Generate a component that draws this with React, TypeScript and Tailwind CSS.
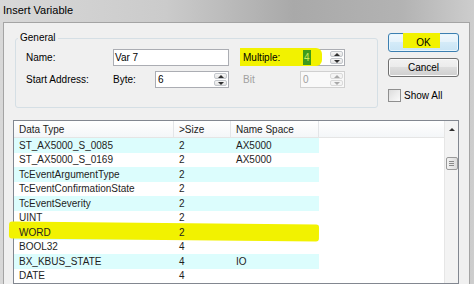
import React from "react";

const rows = [
  { type: "ST_AX5000_S_0085", size: "2", ns: "AX5000" },
  { type: "ST_AX5000_S_0169", size: "2", ns: "AX5000" },
  { type: "TcEventArgumentType", size: "2", ns: "" },
  { type: "TcEventConfirmationState", size: "2", ns: "" },
  { type: "TcEventSeverity", size: "2", ns: "" },
  { type: "UINT", size: "2", ns: "" },
  { type: "WORD", size: "2", ns: "" },
  { type: "BOOL32", size: "4", ns: "" },
  { type: "BX_KBUS_STATE", size: "4", ns: "IO" },
  { type: "DATE", size: "4", ns: "" },
];

const Arrow = ({ up, disabled }: { up?: boolean; disabled?: boolean }) => (
  <span
    className={
      "h-0 w-0 border-l-[3px] border-r-[3px] border-l-transparent border-r-transparent " +
      (up
        ? disabled
          ? "border-b-[3px] border-b-[#a8a8a8]"
          : "border-b-[3px] border-b-[#303030]"
        : disabled
          ? "border-t-[3px] border-t-[#a8a8a8]"
          : "border-t-[3px] border-t-[#303030]")
    }
  />
);

const SpinBox = ({
  width,
  value,
  disabled,
  selected,
}: {
  width: string;
  value: string;
  disabled?: boolean;
  selected?: boolean;
}) => (
  <div
    className={
      "flex h-[17px] border " +
      width +
      (disabled ? " border-[#d0d0d0] bg-[#f9f9f9]" : " border-[#abadb3] bg-white")
    }
  >
    <div className={"flex flex-1 items-center pl-[2px] " + (disabled ? "text-[#a0a0a0]" : "")}>
      {selected ? (
        <span className="relative z-20 bg-[#3e9a1c] px-[1px] text-[#cfe85a]">{value}</span>
      ) : (
        value
      )}
    </div>
    <div className="relative z-20 flex w-[15px] flex-col gap-px p-px">
      <div
        className={
          "flex flex-1 items-center justify-center rounded-[2px] border " +
          (disabled
            ? "border-[#dadada] bg-[#f4f4f4]"
            : "border-[#c3c7cc] bg-[linear-gradient(#f6f6f6,#e3e3e3)]")
        }
      >
        <Arrow up disabled={disabled} />
      </div>
      <div
        className={
          "flex flex-1 items-center justify-center rounded-[2px] border " +
          (disabled
            ? "border-[#dadada] bg-[#f4f4f4]"
            : "border-[#c3c7cc] bg-[linear-gradient(#f6f6f6,#e3e3e3)]")
        }
      >
        <Arrow disabled={disabled} />
      </div>
    </div>
  </div>
);

export default function App() {
  return (
    <div className="relative flex h-[284px] w-[474px] flex-col overflow-hidden bg-[linear-gradient(to_right,#d8d8d8_0%,#cbcbcb_35%,#a9a9a9_62%,#b3b3b3_85%,#cdcdcd_100%)] font-['Liberation_Sans',Arial,sans-serif] text-[10px] text-black">
      {/* title bar */}
      <div className="flex h-[22px] shrink-0 items-center pl-[3px] pb-[2px] text-[11px]">
        Insert Variable
      </div>

      <div className="flex min-h-0 flex-1 pl-[3px] pr-[4px]">
        <div className="flex min-h-0 flex-1 flex-col border-l border-r border-t border-[#a4a4a4] bg-[#f0f0f0]">
          {/* top section */}
          <div className="flex items-start">
            <fieldset className="ml-[11px] mt-[9px] w-[363px] min-w-0 rounded-[3px] border border-[#d5dfe5] px-[10px] pb-[19px]">
              <legend className="-ml-[8px] px-[2px] leading-[12px]">General</legend>
              <div className="flex flex-col gap-[5px] pt-[5px]">
                <div className="flex h-[17px] items-center">
                  <div className="w-[87px]">Name:</div>
                  <div className="flex h-[17px] w-[116px] items-center border border-[#abadb3] bg-white pl-[1px]">
                    Var 7
                  </div>
                  <div className="w-[14px]" />
                  <div className="relative z-20 w-[57px]">Multiple:</div>
                  <SpinBox width="w-[45px]" value="4" selected />
                </div>
                <div className="flex h-[17px] items-center">
                  <div className="w-[87px]">Start Address:</div>
                  <div className="w-[42px]">Byte:</div>
                  <SpinBox width="w-[74px]" value="6" />
                  <div className="w-[14px]" />
                  <div className="w-[57px] text-[#a0a0a0]">Bit</div>
                  <SpinBox width="w-[45px]" value="0" disabled />
                </div>
              </div>
            </fieldset>

            <div className="ml-[10px] mt-[10px] flex w-[71px] flex-col">
              <button className="h-[19px] rounded-[3px] border border-[#3c7fb1] bg-[linear-gradient(#f1f8fd,#e4f2fb_50%,#d4ebf8_50%,#c9e4f5)] shadow-[inset_0_0_0_1px_#e8f6fd]">
                <span className="relative z-20">OK</span>
              </button>
              <button className="mt-[6px] h-[19px] rounded-[3px] border border-[#707070] bg-[linear-gradient(#f2f2f2,#ebebeb_50%,#dddddd_50%,#cfcfcf)] shadow-[inset_0_0_0_1px_#fbfbfb]">
                Cancel
              </button>
              <label className="mt-[11px] flex items-center gap-[3px]">
                <span className="h-[13px] w-[13px] border border-[#8f8f8f] bg-[linear-gradient(135deg,#dcdcdc,#fbfbfb)]" />
                Show All
              </label>
            </div>
          </div>

          {/* list */}
          <div className="ml-[9px] mt-[12px] flex min-h-0 w-[446px] flex-1 border border-[#828790] bg-white">
            <div className="flex w-[430px] flex-col">
              <div className="flex h-[17px] shrink-0 border-b border-[#e5e5e5] bg-[linear-gradient(#ffffff,#f4f6f8)] text-[#222]">
                <div className="flex w-[160px] items-center border-r border-[#e3e5e8] pl-[5px]">Data Type</div>
                <div className="flex w-[57px] items-center border-r border-[#e3e5e8] pl-[5px]">&gt;Size</div>
                <div className="flex w-[88px] items-center border-r border-[#e3e5e8] pl-[5px]">Name Space</div>
                <div className="flex-1" />
              </div>
              {rows.map((r, i) => (
                <div key={r.type} className="flex h-[14.5px] shrink-0 text-[#1e1e1e]">
                  <div className={"flex w-[305px] items-center " + (i % 2 === 0 ? "bg-[#dcfdfd]" : "bg-white")}>
                    <div className="relative z-20 w-[160px] pl-[5px]">{r.type}</div>
                    <div className="relative z-20 w-[57px] pl-[5px]">{r.size}</div>
                    <div className="relative z-20 w-[88px] pl-[5px]">{r.ns}</div>
                  </div>
                </div>
              ))}
            </div>
            {/* scrollbar */}
            <div className="flex w-[14px] flex-col items-center border-l border-[#e6e6e6] bg-[#f3f3f3]">
              <div className="flex h-[17px] w-full items-center justify-center">
                <Arrow up />
              </div>
              <div className="mt-[19px] flex h-[13px] w-[12px] flex-col items-center justify-center gap-px rounded-[2px] border border-[#9a9a9a] bg-[linear-gradient(to_right,#f2f2f2,#dcdcdc)]">
                <span className="h-px w-[5px] bg-[#8a8a8a]" />
                <span className="h-px w-[5px] bg-[#8a8a8a]" />
                <span className="h-px w-[5px] bg-[#8a8a8a]" />
              </div>
            </div>
          </div>
        </div>
      </div>

      {/* yellow highlighter marks */}
      <div className="pointer-events-none absolute left-[403px] top-[33px] z-10 h-[15px] w-[37px] bg-[#f2f200]" />
      <div className="pointer-events-none absolute left-[240px] top-[48px] z-10 h-[18px] w-[82px] rounded-r-[6px] bg-[#f2f200]" />
      <div className="pointer-events-none absolute left-[9px] top-[223px] z-10 h-[17px] w-[310px] rotate-[0.6deg] rounded-[3px] bg-[#f2f200]" />
    </div>
  );
}
